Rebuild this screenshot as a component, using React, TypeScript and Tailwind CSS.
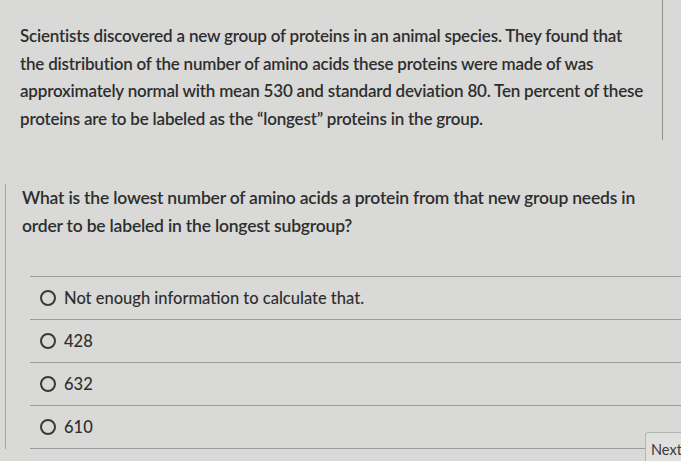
import React from "react";

const options = [
  "Not enough information to calculate that.",
  "428",
  "632",
  "610",
];

export default function App() {
  return (
    <div
      className="relative w-[681px] h-[461px] overflow-hidden bg-[#d9d9d7] text-[#2e2e2e]"
      style={{ fontFamily: "Lato, 'Open Sans', sans-serif" }}
    >
      <div className="absolute right-[18px] top-0 h-[140px] w-px bg-[#8f8f8f]" />
      <div className="pl-[20px] pr-[30px] pt-[22px]">
        <p className="text-[17px] leading-[27.5px] font-semibold tracking-[-0.2px] whitespace-nowrap">
          Scientists discovered a new group of proteins in an animal species. They found that
          <br />
          the distribution of the number of amino acids these proteins were made of was
          <br />
          approximately normal with mean 530 and standard deviation 80. Ten percent of these
          <br />
          proteins are to be labeled as the “longest” proteins in the group.
        </p>
      </div>
      <div className="ml-[5px] mt-[52px] border-l border-[#a3a3a3] pl-[16px]">
        <p className="text-[17.5px] leading-[28px] font-semibold tracking-[-0.2px] whitespace-nowrap">
          What is the lowest number of amino acids a protein from that new group needs in
          <br />
          order to be labeled in the longest subgroup?
        </p>
        <div className="mt-[36px] ml-[8px] border-t border-[#9c9c9c]">
          {options.map((o) => (
            <div
              key={o}
              className="flex h-[43px] items-center gap-[8px] border-b border-[#9c9c9c] pl-[10px]"
            >
              <span className="h-[16px] w-[16px] rounded-full border-2 border-[#3a3a3a]" />
              <span className="text-[16.5px] font-medium">{o}</span>
            </div>
          ))}
        </div>
      </div>
      <div className="absolute left-[645px] top-[432px] h-[40px] w-[60px] rounded-[3px] border border-[#b4b4b4] bg-[#e0e0de] pl-[5px] pt-[6px] text-[14.5px] text-[#3a3a3a]">
        Next
      </div>
    </div>
  );
}
